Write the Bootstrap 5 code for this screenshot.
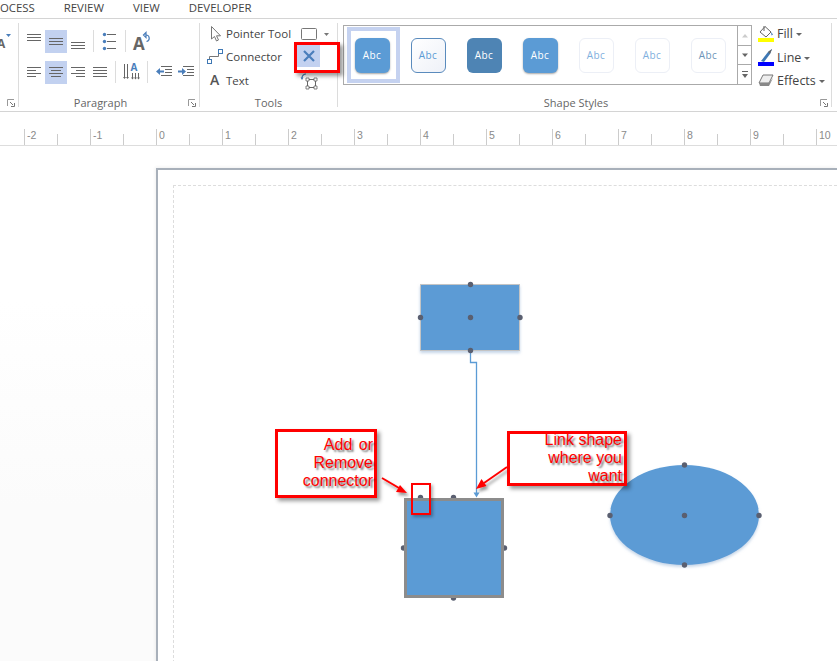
<!DOCTYPE html>
<html lang="en">
<head>
<meta charset="utf-8">
<title>Visio ribbon</title>
<link href="https://cdn.jsdelivr.net/npm/bootstrap@5.3.0/dist/css/bootstrap.min.css" rel="stylesheet">
<style>
html,body{height:100%;overflow:hidden;background:#fff}
body{font-family:"Open Sans","Noto Sans",sans-serif;font-size:11.5px;color:#444}
svg{display:block;flex:none}
.tabbar{height:19px;border-bottom:1px solid #d4d4d4;gap:29px;line-height:15px;font-size:11.4px;color:#444;flex:none;white-space:nowrap}
.tabbar span:first-child{margin-left:-14px}
.ribbon{height:93px;border-bottom:1px solid #d4d4d4;flex:none;padding-top:4px;align-items:flex-start}
.grp{height:84px;border-right:1px solid #dcdcdc;flex:none}
.g0{width:19px}.g1{width:181px}.g2{width:138px}.g3{width:494px}
.gbody{flex:1 1 auto;min-height:0}
.glabel{height:14px;line-height:14px;margin-bottom:-3px;color:#666;font-size:11px;flex:none}
.launch{width:17px;flex:none;padding:3px 0 0 6px}
.rowp{height:23px;padding-left:4px}
.rowp+.rowp{margin-top:8px}
.rowfirst{margin-top:-1px}
.pcell{width:22px;height:23px;flex:none}
.pcell.on,.xcell{background:#c2d1f0}
.vsep{width:1px;height:22px;background:#dcdcdc;flex:none}
.m4{margin-left:4px}.m5{margin-left:5px}
.toolwrap{margin-top:-2px;padding-left:5px}
.toolcol{width:92px;padding-top:1px}
.toolrow{height:23.4px;line-height:23px;white-space:nowrap}
.toolrow .ti{width:21px;flex:none}
.btxt{display:block;font-weight:600;color:#555;font-size:14px;line-height:22px;padding-left:5px}
.xcell{width:23px;height:23px}
.shiftdown{margin-top:2px}
.redmark{position:absolute;left:94px;top:19px;width:46px;height:31px;border:3px solid #f00;box-shadow:3px 3px 4px rgba(0,0,0,.4);pointer-events:none}
.gallery{width:409px;height:60px;border:1px solid #aaa;margin:2px 0 0 5px;flex:none;background:#fff}
.gcell{width:56px;height:58px;flex:none}
.gcell.sel{width:53px;margin:1px 0 1px 3px;height:56px;border:4px solid #c5d2f0;padding-right:3px}
.swatch{width:35px;height:35px;border-radius:6px;font-size:10px;letter-spacing:.4px;line-height:33px;text-align:center;border:1px solid transparent}
.sw-a{background:#5b9bd5;color:#fff;box-shadow:0 1px 2px rgba(0,0,0,.35)}
.sw-b{background:linear-gradient(135deg,#fff,#eef1f8);color:#5b9bd5;border-color:#5a8bbd}
.sw-c{background:#4e84b4;color:#fff}
.sw-d{background:#fff;color:#7fb0de;border-color:#eceff6}
.sw-e{background:#fff;color:#6d94b8;border-color:#eceff6}
.gspacer{flex:1 1 auto}
.gscroll{width:14px;border-left:1px solid #aaa;flex:none}
.gscroll>div{flex:1 1 0;border-bottom:1px solid #aaa}
.gscroll>div:last-child{border-bottom:0}
.fmt{margin-left:6px;margin-top:-1px;flex:none}
.fmtrow{height:23.4px;line-height:23px;gap:3px;white-space:nowrap;font-size:12.5px}
.car{width:0;height:0;border:3px solid transparent;border-top:3px solid #666;border-bottom:0;margin-left:3px;display:inline-block;vertical-align:middle}
.ruler{height:34px;border-bottom:1px solid #ddd;padding-left:24px;flex:none;align-items:flex-end;overflow:hidden}
.rcell{width:66px;height:16px;border-left:1px solid #ccc;flex:none;position:relative;padding-left:2px;font-size:10.5px;line-height:12px;color:#8a8a8a;font-family:"Liberation Sans",sans-serif}
.rcell::after{content:"";position:absolute;left:32px;bottom:0;width:1px;height:11px;background:#ccc}
.workspace{flex:1 1 auto;min-height:0;position:relative;overflow:hidden;background:linear-gradient(#fff,#fff 30%,#fbfbfb 70%);padding:22px 0 0 156px}
.sheet{height:600px;background:#fff;border-top:2px solid #a8b0ba;border-left:2px solid #a8b0ba;padding:15px 0 0 15px;box-shadow:-1px -1px 3px rgba(0,0,0,.06)}
.margins{height:100%;border-top:1px dashed #ddd;border-left:1px dashed #ddd}
.stage{position:absolute;left:0;top:0;width:837px;height:515px}
.note{position:absolute;border:3px solid #f00;background:#fff;color:#f00;font-family:"Liberation Sans",Arial,sans-serif;font-size:16px;line-height:18px;text-align:right;text-shadow:2px 2px 2px rgba(0,0,0,.55);box-shadow:3px 3px 4px rgba(0,0,0,.4)}
.n1{left:275px;top:283px;width:102px;height:69px;padding:4px 1px 0 0;word-spacing:2px}
.n2{left:507px;top:285px;width:120px;height:55px;padding:0 2px 0 0}
.n2 div{margin-top:-3px}
.n3{position:absolute;left:411px;top:337px;width:20px;height:32px;border:2.500px solid #f00;box-shadow:2px 2px 3px rgba(0,0,0,.3)}
</style>
</head>
<body>
<div class="d-flex flex-column h-100">
  <div class="tabbar d-flex">
    <span>PROCESS</span><span>REVIEW</span><span>VIEW</span><span>DEVELOPER</span>
  </div>

  <div class="ribbon d-flex">
    <div class="grp g0 d-flex flex-column">
      <div class="gbody">
        <svg width="18" height="30" viewBox="0 23 18 30"><text x="-3" y="47.500" font-family="Open Sans" font-weight="700" font-size="12" fill="#666">A</text><path d="M6 34h5l-2.500 3z" fill="#4a7ebb"/></svg>
      </div>
      <div class="glabel d-flex justify-content-end"><span class="launch"><svg width="9" height="9" viewBox="0 0 9 9"><path d="M.5 7V.5H7" fill="none" stroke="#999"/><path d="M3 3l3 3M7.500 4v3.500H4" fill="none" stroke="#777"/></svg></span></div>
    </div>

    <div class="grp g1 d-flex flex-column">
      <div class="gbody pt-2">
        <div class="rowp rowfirst d-flex">
          <div class="pcell"><svg width="22" height="23" viewBox="0 0 22 23"><path d="M4 4.500h14M4 7.500h14M4 10.500h14" stroke="#666"/></svg></div>
          <div class="pcell on"><svg width="22" height="23" viewBox="0 0 22 23"><path d="M4 8.500h14M4 11.500h14M4 14.500h14" stroke="#666"/></svg></div>
          <div class="pcell"><svg width="22" height="23" viewBox="0 0 22 23"><path d="M4 12.500h14M4 15.500h14M4 18.500h14" stroke="#666"/></svg></div>
          <div class="vsep m4"></div>
          <div class="pcell m4"><svg width="22" height="23" viewBox="0 0 22 23"><path d="M9 4.500h9M9 11.500h9M9 18.500h9" stroke="#666"/><circle cx="6.500" cy="4.500" r="1.700" fill="#4a7ebb"/><circle cx="6.500" cy="11.500" r="1.700" fill="#4a7ebb"/><circle cx="6.500" cy="18.500" r="1.700" fill="#4a7ebb"/></svg></div>
          <div class="vsep m5"></div>
          <div class="pcell m4"><svg width="22" height="23" viewBox="0 0 22 23"><text x="3" y="20" font-family="Open Sans" font-weight="700" font-size="17" fill="#666">A</text><path d="M13.500 5l2.500-2.500v5zM15.500 5h1a3.300 3.300 0 0 1 0 6.500" fill="none" stroke="#4a7ebb" stroke-width="1.200"/></svg></div>
        </div>
        <div class="rowp d-flex">
          <div class="pcell"><svg width="22" height="23" viewBox="0 0 22 23"><path d="M4 6.500h14M4 9.500h9M4 12.500h14M4 15.500h9" stroke="#666"/></svg></div>
          <div class="pcell on"><svg width="22" height="23" viewBox="0 0 22 23"><path d="M4 6.500h14M6 9.500h10M4 12.500h14M6 15.500h10" stroke="#666"/></svg></div>
          <div class="pcell"><svg width="22" height="23" viewBox="0 0 22 23"><path d="M4 6.500h14M9 9.500h9M4 12.500h14M9 15.500h9" stroke="#666"/></svg></div>
          <div class="pcell"><svg width="22" height="23" viewBox="0 0 22 23"><path d="M4 6.500h14M4 9.500h14M4 12.500h14M4 15.500h14" stroke="#666"/></svg></div>
          <div class="vsep m4"></div>
          <div class="pcell m4"><svg width="22" height="23" viewBox="0 0 22 23"><path d="M4.500 3v13M7.500 3v13M12.500 12v5M15.500 12v5M18.500 12v5" stroke="#666"/><path d="M3 16h3l-1.500 2zM6 16h3l-1.500 2zM11 16.500h3l-1.500 2zM14 16.500h3l-1.500 2zM17 16.500h3l-1.500 2z" fill="#666"/><text x="10.500" y="10" font-family="Open Sans" font-weight="700" font-size="10" fill="#4a7ebb">A</text></svg></div>
          <div class="vsep m5"></div>
          <div class="pcell m4"><svg width="22" height="23" viewBox="0 0 22 23"><path d="M9 5.500h11M13 8.500h7M13 11.500h7M9 14.500h11" stroke="#666"/><path d="M4 10.500l4-3.500v2.500h4v2H8V14z" fill="#4a7ebb"/></svg></div>
          <div class="pcell"><svg width="22" height="23" viewBox="0 0 22 23"><path d="M9 5.500h11M13 8.500h7M13 11.500h7M9 14.500h11" stroke="#666"/><path d="M12 10.500L8 7v2.500H4v2h4V14z" fill="#4a7ebb"/></svg></div>
        </div>
      </div>
      <div class="glabel d-flex"><span class="flex-grow-1 text-center">Paragraph</span><span class="launch"><svg width="9" height="9" viewBox="0 0 9 9"><path d="M.5 7V.5H7" fill="none" stroke="#999"/><path d="M3 3l3 3M7.500 4v3.500H4" fill="none" stroke="#777"/></svg></span></div>
    </div>

    <div class="grp g2 d-flex flex-column position-relative">
      <div class="gbody d-flex toolwrap">
        <div class="toolcol">
          <div class="toolrow d-flex">
            <span class="ti d-flex align-items-center"><svg width="18" height="18" viewBox="0 0 18 18"><path d="M6.500 1.500v12.500l3-2.500 2 4.500 2-1-2-4.200h4z" fill="#fff" stroke="#777"/></svg></span><span>Pointer Tool</span>
          </div>
          <div class="toolrow d-flex">
            <span class="ti d-flex align-items-center"><svg width="18" height="18" viewBox="0 0 18 18"><path d="M4.500 11V8.500h9V5" fill="none" stroke="#777"/><rect x="2.500" y="11.500" width="4" height="4" fill="#fff" stroke="#3f78b4"/><rect x="13.500" y="1.500" width="4" height="4" fill="#fff" stroke="#3f78b4"/></svg></span><span>Connector</span>
          </div>
          <div class="toolrow d-flex">
            <span class="ti"><span class="btxt">A</span></span><span>Text</span>
          </div>
        </div>
        <div>
          <div class="toolrow d-flex align-items-center">
            <svg class="shiftdown" width="34" height="14" viewBox="0 0 34 14"><rect x="4.500" y="1.500" width="15" height="11" rx="1" fill="#fff" stroke="#777"/><path d="M27 6h5l-2.500 3z" fill="#777"/></svg>
          </div>
          <div class="toolrow"><div class="xcell d-flex align-items-center justify-content-center"><svg width="14" height="12" viewBox="0 0 14 12"><path d="M2 1l10 10M12 1L2 11" stroke="#4a7ebb" stroke-width="2.200"/></svg></div></div>
          <div class="toolrow"><svg class="shiftdown" width="23" height="20" viewBox="0 0 23 20"><rect x="10.500" y="9.500" width="8" height="8" fill="none" stroke="#666"/><path d="M9 8h3v3H9zM17 8h3v3h-3zM9 16h3v3H9zM17 16h3v3h-3z" fill="#fff" stroke="#666" stroke-width=".8"/><path d="M5 8a4 4 0 0 1 4-4" fill="none" stroke="#3f78b4" stroke-width="1.200"/><path d="M3.500 7.500h3L5 10z" fill="#3f78b4"/></svg></div>
        </div>
      </div>
      <div class="glabel d-flex"><span class="flex-grow-1 text-center">Tools</span></div>
      <div class="redmark"></div>
    </div>

    <div class="grp g3 d-flex flex-column">
      <div class="gbody d-flex">
        <div class="gallery d-flex">
          <div class="gcell sel d-flex align-items-center justify-content-center"><div class="swatch sw-a">Abc</div></div>
          <div class="gcell d-flex align-items-center justify-content-center"><div class="swatch sw-b">Abc</div></div>
          <div class="gcell d-flex align-items-center justify-content-center"><div class="swatch sw-c">Abc</div></div>
          <div class="gcell d-flex align-items-center justify-content-center"><div class="swatch sw-a">Abc</div></div>
          <div class="gcell d-flex align-items-center justify-content-center"><div class="swatch sw-d">Abc</div></div>
          <div class="gcell d-flex align-items-center justify-content-center"><div class="swatch sw-d">Abc</div></div>
          <div class="gcell d-flex align-items-center justify-content-center"><div class="swatch sw-e">Abc</div></div>
          <div class="gspacer"></div>
          <div class="gscroll d-flex flex-column">
            <div class="d-flex align-items-center justify-content-center"><svg width="8" height="5" viewBox="0 0 8 5"><path d="M1 4.500h6L4 1z" fill="#ccc"/></svg></div>
            <div class="d-flex align-items-center justify-content-center"><svg width="8" height="5" viewBox="0 0 8 5"><path d="M1 .5h6L4 4z" fill="#666"/></svg></div>
            <div class="d-flex align-items-center justify-content-center"><svg width="8" height="8" viewBox="0 0 8 8"><path d="M1 .5h6" stroke="#666"/><path d="M1 3h6L4 7z" fill="#666"/></svg></div>
          </div>
        </div>
        <div class="fmt">
          <div class="fmtrow d-flex align-items-center">
            <svg width="16" height="18" viewBox="0 0 16 18"><path d="M7 1.500l6 5.500-5 5-6-5z" fill="#fff" stroke="#666"/><path d="M6 1v5" stroke="#666"/><path d="M13 7l2 2.500-1.500 1z" fill="#3f78b4"/><rect y="13" width="16" height="4" fill="#ff0"/></svg><span>Fill<i class="car"></i></span>
          </div>
          <div class="fmtrow d-flex align-items-center">
            <svg width="16" height="19" viewBox="0 0 16 19"><path d="M3 13l7-9 4-3-2 5-6 8z" fill="#3f78b4"/><path d="M10 4l4-3-2 5z" fill="#666"/><rect y="14" width="16" height="4" fill="#00f"/></svg><span>Line<i class="car"></i></span>
          </div>
          <div class="fmtrow d-flex align-items-center">
            <svg width="16" height="16" viewBox="0 0 16 16"><path d="M1 11l4-8h10l-4 8z" fill="#eee" stroke="#777"/><path d="M1 11l1 3h9l4-8-4 5z" fill="#888"/></svg><span>Effects<i class="car"></i></span>
          </div>
        </div>
      </div>
      <div class="glabel d-flex"><span class="flex-grow-1 text-center">Shape Styles</span><span class="launch"><svg width="9" height="9" viewBox="0 0 9 9"><path d="M.5 7V.5H7" fill="none" stroke="#999"/><path d="M3 3l3 3M7.500 4v3.500H4" fill="none" stroke="#777"/></svg></span></div>
    </div>
  </div>

  <div class="ruler d-flex">
    <div class="rcell">-2</div><div class="rcell">-1</div><div class="rcell">0</div><div class="rcell">1</div><div class="rcell">2</div><div class="rcell">3</div><div class="rcell">4</div><div class="rcell">5</div><div class="rcell">6</div><div class="rcell">7</div><div class="rcell">8</div><div class="rcell">9</div><div class="rcell">10</div>
  </div>

  <div class="workspace">
    <div class="sheet"><div class="margins"></div></div>
    <svg class="stage" viewBox="0 146 837 515">
      <defs>
        <filter id="soft" x="-10%" y="-10%" width="125%" height="125%"><feDropShadow dx="0" dy="2" stdDeviation="1.500" flood-color="#9db9d8" flood-opacity=".6"/></filter>
        <filter id="arrowshadow" x="-30%" y="-30%" width="170%" height="170%"><feDropShadow dx="2" dy="3" stdDeviation="1.500" flood-color="#000" flood-opacity=".4"/></filter>
      </defs>
      <rect x="420.500" y="284.500" width="99" height="66" fill="#5b9bd5" stroke="#c4c4c4" filter="url(#soft)"/>
      <path d="M470.500 351v11.500h6V493" fill="none" stroke="#5b9bd5" stroke-width="1.300"/>
      <path d="M473.500 492.500h6l-3 5z" fill="#5b9bd5"/>
      <g fill="#5a5f70">
        <circle cx="470.500" cy="284.500" r="2.700"/><circle cx="420.500" cy="317.500" r="2.700"/><circle cx="520" cy="317.500" r="2.700"/><circle cx="470.500" cy="317.500" r="2.700"/><circle cx="470.500" cy="350.500" r="2.700"/>
        <circle cx="420.500" cy="497.500" r="2.700"/><circle cx="453.500" cy="497.500" r="2.700"/><circle cx="403.500" cy="548" r="2.700"/><circle cx="504.500" cy="548" r="2.700"/><circle cx="453.500" cy="598" r="2.700"/>
      </g>
      <rect x="405.500" y="499.500" width="97" height="97" fill="#5b9bd5" stroke="#8c8c8c" stroke-width="3"/>
      <ellipse cx="684.500" cy="515" rx="74.500" ry="50" fill="#5b9bd5" filter="url(#soft)"/>
      <g fill="#5a5f70">
        <circle cx="684.500" cy="465" r="2.700"/><circle cx="610" cy="515.500" r="2.700"/><circle cx="759" cy="515.500" r="2.700"/><circle cx="684.500" cy="515.500" r="2.700"/><circle cx="684.500" cy="565" r="2.700"/>
      </g>
      <g filter="url(#arrowshadow)">
        <path d="M382 478l17 10" stroke="#f00" stroke-width="2" fill="none"/>
        <path d="M407 493l-11-1 4-7z" fill="#f00"/>
        <path d="M507 467l-23 16" stroke="#f00" stroke-width="2" fill="none"/>
        <path d="M476 489l5.500-10 5 7z" fill="#f00"/>
      </g>
    </svg>
    <div class="note n1">Add or<br>Remove<br>connector</div>
    <div class="note n2"><div>Link shape<br>where you<br>want</div></div>
    <div class="n3"></div>
  </div>
</div>
<script src="https://cdn.jsdelivr.net/npm/bootstrap@5.3.0/dist/js/bootstrap.bundle.min.js"></script>
</body>
</html>
